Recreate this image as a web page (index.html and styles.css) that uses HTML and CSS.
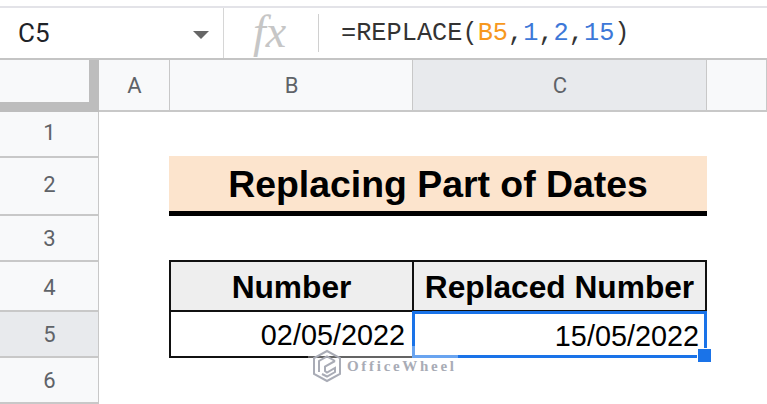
FILE: index.html
```html
<!DOCTYPE html>
<html lang="en">
<head>
    <meta charset="UTF-8">
    <title>Replacing Part of Dates</title>
    <link rel="stylesheet" href="styles.css">
</head>
<body>
    <!-- Formula bar -->
    <div class="formula-bar">
        <div class="name-box">
            <span class="cell-name">C5</span>
            <span class="name-arrow"></span>
        </div>
        <div class="fx-box"><span class="fx">fx</span></div>
        <div class="formula">=REPLACE(<span class="ref">B5</span>,<span class="num">1</span>,<span class="num">2</span>,<span class="num">15</span>)</div>
    </div>

    <!-- Sheet grid -->
    <div class="sheet">
        <div class="corner"></div>
        <div class="col-head">A</div>
        <div class="col-head">B</div>
        <div class="col-head active">C</div>
        <div class="col-head"></div>

        <div class="row-head row-1">1</div>
        <div class="row-head row-2">2</div>
        <div class="title">Replacing Part of Dates</div>
        <div class="row-head row-3">3</div>
        <div class="row-head row-4">4</div>
        <div class="table-head head-b">Number</div>
        <div class="table-head head-c">Replaced Number</div>
        <div class="row-head row-5 active">5</div>
        <div class="table-cell cell-b">02/05/2022</div>
        <div class="table-cell cell-c">15/05/2022<span class="handle"></span></div>
        <div class="row-head row-6">6</div>
    </div>

    <!-- Watermark -->
    <div class="watermark">
        <svg class="wm-logo" width="30" height="34" viewBox="0 0 30 34" fill="none" stroke="#a9acb6" stroke-width="2">
            <path d="M15 2 L28 9 V25 L15 32 L2 25 V9 Z"/>
            <path d="M7 23 V12 L15 7.5 L23 12"/>
            <path d="M23 12 L13 17.5 V22 L15 23.5 L23 19 V23 L15 27.5 L10 25"/>
        </svg>
        <span class="wm-text">OfficeWheel</span>
    </div>
</body>
</html>
```

FILE: styles.css
```css
/* Page */
body {
    margin: 0;
    width: 767px;
    height: 404px;
    overflow: hidden;
    position: relative;
    background: #fff;
    font-family: "Liberation Sans", Arial, sans-serif;
}

/* Formula bar */
.formula-bar {
    display: flex;
    align-items: center;
    height: 54px;
    margin-top: 6px;
    border-top: 2px solid #e3e3e8;
    border-bottom: 2px solid #c4c4c4;
    box-sizing: border-box;
}

.name-box {
    display: flex;
    align-items: center;
    justify-content: space-between;
    width: 224px;
    height: 100%;
    box-sizing: border-box;
    padding: 0 3px 0 18px;
    border-right: 1px solid #d6d6d6;
}

.cell-name {
    font-family: Roboto, sans-serif;
    font-size: 26px;
    line-height: 48px;
    color: #1f2328;
}

.name-arrow {
    width: 0;
    height: 0;
    margin-top: 3px;
    margin-right: 11px;
    border-left: 8px solid transparent;
    border-right: 8px solid transparent;
    border-top: 8px solid #666;
}

.fx-box {
    display: flex;
    justify-content: center;
    width: 95px;
    height: 38px;
    padding-right: 3px;
    box-sizing: border-box;
    border-right: 1px solid #d0d0d0;
}

.fx {
    font-family: "Liberation Serif", serif;
    font-style: italic;
    font-size: 46px;
    line-height: 36px;
    color: #c6c6c6;
}

.formula {
    margin-left: 22px;
    padding-top: 1px;
    font-family: "Liberation Mono", monospace;
    font-size: 25.3px;
    color: #333;
}

.ref {
    color: #f7981d;
}

.num {
    color: #3d78d8;
}

/* Sheet */
.sheet {
    display: grid;
    grid-template-columns: 99px 71px 243px 294px 60px;
    grid-template-rows: 52px 46px 58px 46px 50px 46px 46px;
}

.corner {
    background: #f8f9fa;
    border-right: 10px solid #bdbdbd;
    border-bottom: 10px solid #bdbdbd;
    box-sizing: border-box;
}

.col-head, .row-head {
    display: flex;
    align-items: center;
    justify-content: center;
    padding-left: 1px;
    font-family: Roboto, sans-serif;
    font-size: 22px;
    color: #5f6368;
    background: #f8f9fa;
    box-sizing: border-box;
    border-bottom: 2px solid #c8c8c8;
    border-right: 1.5px solid #c8c8c8;
}

.row-head {
    grid-column: 1;
}

.active {
    background: #e8eaed;
}

.row-1 { grid-row: 2; padding-bottom: 4px; }
.row-2 { grid-row: 3; padding-bottom: 4px; }
.row-3 { grid-row: 4; }
.row-4 { grid-row: 5; padding-top: 2px; }
.row-5 { grid-row: 6; }
.row-6 { grid-row: 7; }

/* Title */
.title {
    grid-column: 3 / 5;
    grid-row: 3;
    height: 60px;
    margin-top: -2px;
    margin-left: -1px;
    box-sizing: border-box;
    background: #fce4cd;
    border-bottom: 5px solid #000;
    text-align: center;
    font-weight: bold;
    font-size: 37.4px;
    line-height: 56px;
    color: #000;
}

/* Data table */
.table-head, .table-cell {
    box-sizing: border-box;
    margin-left: -1px;
    color: #000;
}

.table-head {
    grid-row: 5;
    margin-top: -2px;
    background: #eeeeee;
    border: 2px solid #111;
    border-right-width: 1px;
    text-align: center;
    font-weight: bold;
    font-size: 31.7px;
    line-height: 50px;
    white-space: nowrap;
}

.table-cell {
    grid-row: 6;
    text-align: right;
    font-size: 28.8px;
    line-height: 46px;
}

.head-b, .cell-b { grid-column: 3; }
.head-c, .cell-c { grid-column: 4; }

.head-c {
    border-right-width: 2px;
}

.cell-b {
    border-left: 2px solid #111;
    border-bottom: 2px solid #111;
    padding-right: 8px;
}

.cell-c {
    position: relative;
    border: 3px solid #1a73e8;
    margin-top: -1px;
    line-height: 44px;
    padding-right: 5px;
}

.handle {
    position: absolute;
    right: -8px;
    bottom: -8px;
    width: 15px;
    height: 15px;
    background: #1a73e8;
    border: 1px solid #fff;
    box-sizing: border-box;
}

/* Watermark */
.watermark {
    position: absolute;
    left: 308px;
    top: 346px;
    width: 150px;
    height: 40px;
    display: flex;
    align-items: center;
    gap: 5px;
    padding-left: 4px;
    box-sizing: border-box;
    background: rgba(255, 255, 255, 0.35);
}

.wm-text {
    font-family: "Liberation Serif", serif;
    font-weight: bold;
    font-size: 15px;
    letter-spacing: 2.7px;
    color: #a9acb6;
}
```
